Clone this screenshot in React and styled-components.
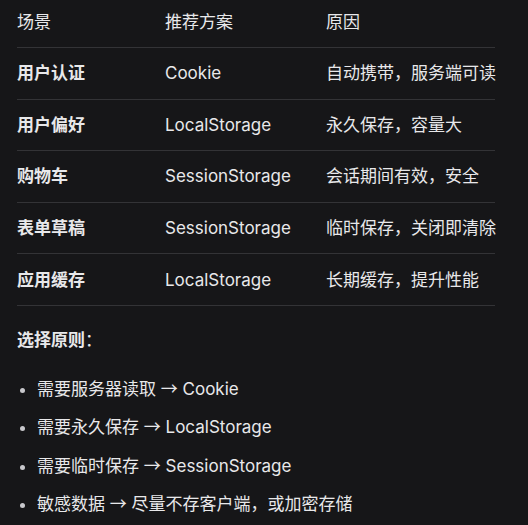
import React from 'react'
import styled, { createGlobalStyle } from 'styled-components'

const Global = createGlobalStyle`
  html, body {
    margin: 0;
    padding: 0;
    background: #161618;
  }
  body {
    font-family: "Inter", "Noto Sans CJK SC", sans-serif;
    color: #e8e8ea;
    font-size: 17px;
  }
`

const rows = [
  ['用户认证', 'Cookie', '自动携带，服务端可读'],
  ['用户偏好', 'LocalStorage', '永久保存，容量大'],
  ['购物车', 'SessionStorage', '会话期间有效，安全'],
  ['表单草稿', 'SessionStorage', '临时保存，关闭即清除'],
  ['应用缓存', 'LocalStorage', '长期缓存，提升性能'],
]

const tips = [
  ['需要服务器读取', 'Cookie'],
  ['需要永久保存', 'LocalStorage'],
  ['需要临时保存', 'SessionStorage'],
  ['敏感数据', '尽量不存客户端，或加密存储'],
]

function App() {
  return (
    <Page>
      <Global />
      <Table>
        <Row head>
          <Cell>场景</Cell>
          <Cell>推荐方案</Cell>
          <Cell>原因</Cell>
        </Row>
        {rows.map(r => (
          <Row key={r[0]}>
            <Cell bold>{r[0]}</Cell>
            <Cell>{r[1]}</Cell>
            <Cell>{r[2]}</Cell>
          </Row>
        ))}
      </Table>
      <Heading><strong>选择原则</strong>：</Heading>
      <List>
        {tips.map(t => (
          <Item key={t[0]}>{t[0]} <Arrow>→</Arrow> {t[1]}</Item>
        ))}
      </List>
    </Page>
  )
}

export default App

const Page = styled.div`
  padding: 0 17px;
`

const Table = styled.div`
  width: 478px;
  display: flex;
  flex-direction: column;
`

const Row = styled.div`
  display: grid;
  grid-template-columns: 148px 161px 169px;
  padding: ${p => (p.head ? '9.7px 0 13.3px' : '13.3px 0')};
  line-height: 24px;
  border-bottom: 1px solid #333336;
`

const Cell = styled.div`
  font-weight: ${p => (p.bold ? 700 : 400)};
  white-space: nowrap;
`

const Heading = styled.div`
  margin-top: 22px;
  line-height: 24px;
  strong {
    font-weight: 700;
  }
`

const List = styled.ul`
  margin: 25px 0 0;
  padding: 0 0 0 20px;
`

const Item = styled.li`
  height: 24px;
  line-height: 24px;
  margin-bottom: 14.3px;
  &:last-child {
    margin-bottom: 0;
  }
  &::marker {
    color: #c8c8cc;
  }
`

const Arrow = styled.span`
  font-family: "Noto Sans CJK SC", sans-serif;
  line-height: 0;
`
